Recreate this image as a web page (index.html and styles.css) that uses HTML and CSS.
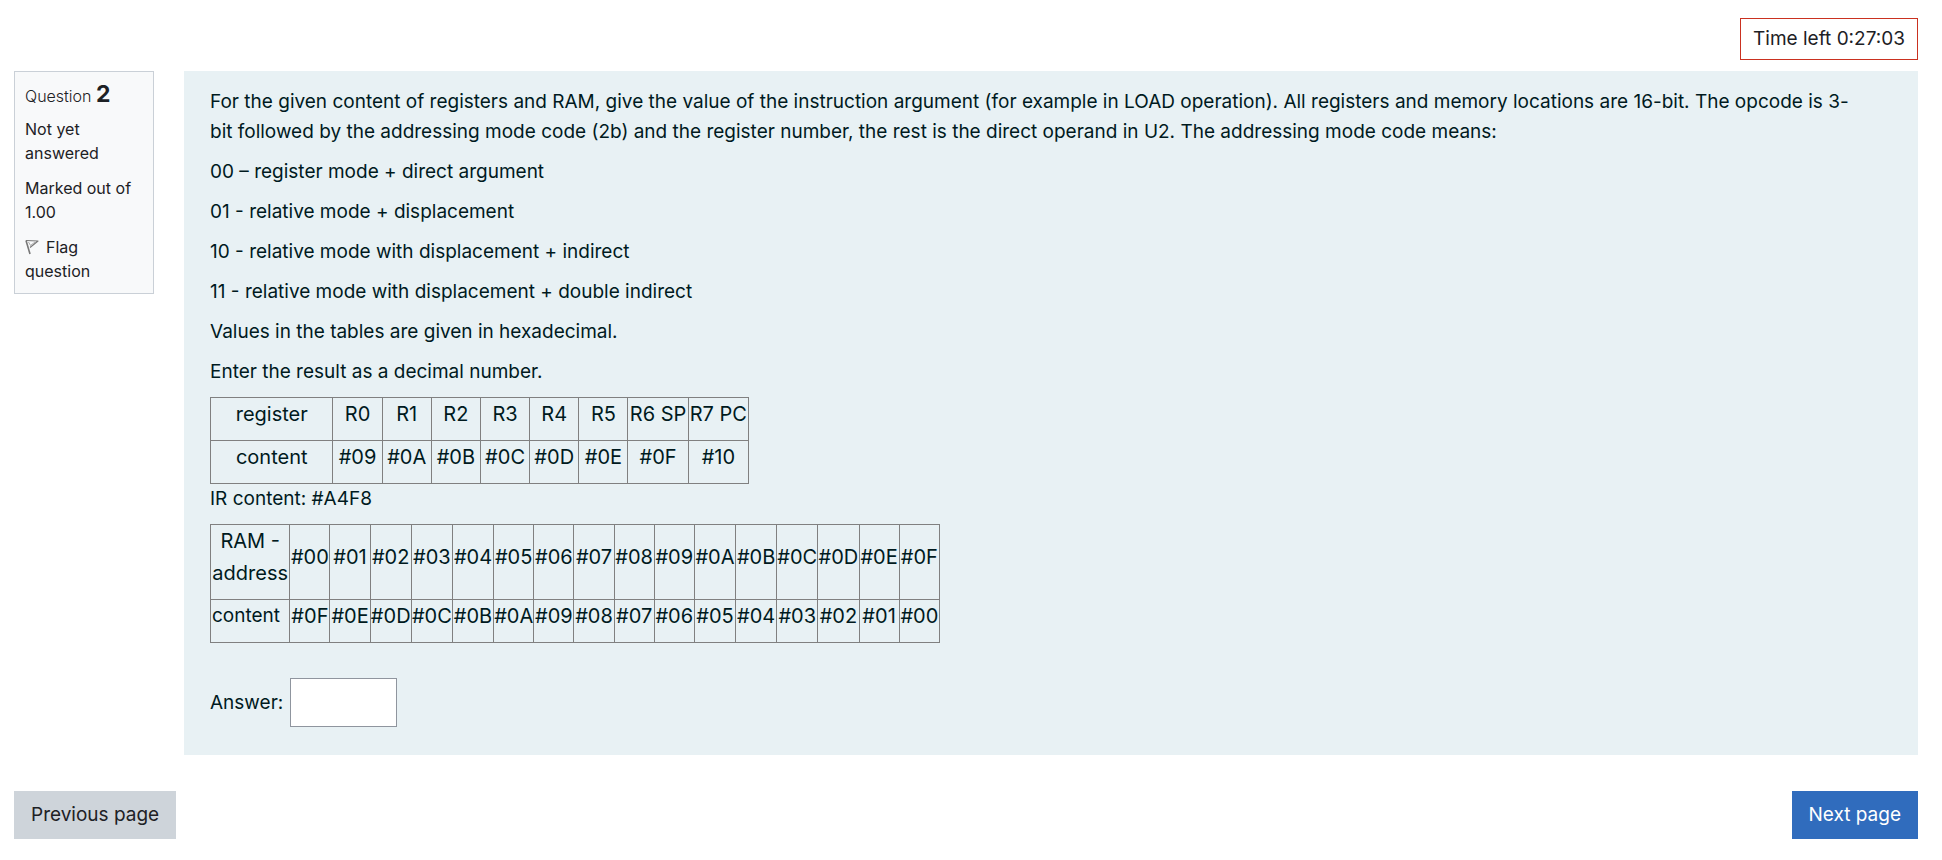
FILE: index.html
```html
<!DOCTYPE html>
<html lang="en">
<head>
    <meta charset="UTF-8">
    <meta name="viewport" content="width=device-width, initial-scale=1.0">
    <title>Quiz</title>
    <link rel="stylesheet" href="styles.css">
</head>
<body>
    <div class="timer-row">
        <div class="timer" role="timer">Time left 0:27:03</div>
    </div>

    <form class="quiz">
        <div class="question">
            <aside class="info">
                <h3>Question <span class="number">2</span></h3>
                <div class="state">Not yet answered</div>
                <div class="grade">Marked out of 1.00</div>
                <a class="flag" href="#"><svg class="flag-icon" width="15" height="16" viewBox="0 0 15 16" fill="none" stroke="#777" stroke-linejoin="round"><path d="M1 1.5L5 15" stroke-width="1.6"/><path d="M1 1.5L13 2L5 8.5" stroke-width="1.2"/><path d="M3.5 3L5.5 6.5L10 3" stroke="#aaa"/></svg>Flag question</a>
            </aside>

            <main class="formulation">
                <p>For the given content of registers and RAM, give the value of the instruction argument (for example in LOAD operation). All registers and memory locations are 16-bit. The opcode is 3-bit followed by the addressing mode code (2b) and the register number, the rest is the direct operand in U2. The addressing mode code means:</p>
                <p>00 – register mode + direct argument</p>
                <p>01 - relative mode + displacement</p>
                <p>10 - relative mode with displacement + indirect</p>
                <p>11 - relative mode with displacement + double indirect</p>
                <p>Values in the tables are given in hexadecimal.</p>
                <p>Enter the result as a decimal number.</p>

                <table class="registers">
                    <colgroup>
                        <col class="label-col">
                        <col class="reg-col" span="6">
                        <col class="special-col" span="2">
                    </colgroup>
                    <tr><td>register</td><td>R0</td><td>R1</td><td>R2</td><td>R3</td><td>R4</td><td>R5</td><td>R6 SP</td><td>R7 PC</td></tr>
                    <tr><td>content</td><td>#09</td><td>#0A</td><td>#0B</td><td>#0C</td><td>#0D</td><td>#0E</td><td>#0F</td><td>#10</td></tr>
                </table>

                <p>IR content: #A4F8</p>

                <table class="ram">
                    <colgroup>
                        <col class="label-col">
                        <col class="narrow-col" span="2">
                        <col class="wide-col" span="3">
                        <col class="narrow-col" span="5">
                        <col class="wide-col" span="4">
                        <col class="narrow-col" span="2">
                    </colgroup>
                    <tr><td>RAM - address</td><td>#00</td><td>#01</td><td>#02</td><td>#03</td><td>#04</td><td>#05</td><td>#06</td><td>#07</td><td>#08</td><td>#09</td><td>#0A</td><td>#0B</td><td>#0C</td><td>#0D</td><td>#0E</td><td>#0F</td></tr>
                    <tr><td class="left">content</td><td>#0F</td><td>#0E</td><td>#0D</td><td>#0C</td><td>#0B</td><td>#0A</td><td>#09</td><td>#08</td><td>#07</td><td>#06</td><td>#05</td><td>#04</td><td>#03</td><td>#02</td><td>#01</td><td>#00</td></tr>
                </table>

                <div class="answer">
                    <label for="answer">Answer:</label>
                    <input type="text" id="answer" name="answer">
                </div>
            </main>
        </div>

        <div class="buttons">
            <button type="submit" class="btn previous">Previous page</button>
            <button type="submit" class="btn next">Next page</button>
        </div>
    </form>
</body>
</html>
```

FILE: styles.css
```css
* {
    box-sizing: border-box;
}
body {
    margin: 0;
    padding: 18px 24px 20px 14px;
    background-color: #fff;
    color: #1d2125;
    font-family: Inter, "Liberation Sans", sans-serif;
    font-size: 19px;
    line-height: 30px;
}
.timer-row {
    display: flex;
    justify-content: flex-end;
    margin-bottom: 11px;
}
.timer {
    padding: 5px 12px;
    border: 1px solid #ca3120;
}
.question {
    display: flex;
    align-items: flex-start;
    gap: 30px;
}
.info {
    flex: 0 0 140px;
    padding: 14px 10px 10px;
    background-color: #f8f9fa;
    border: 1px solid #cad0d7;
    font-size: 16px;
    line-height: 24px;
}
.info h3 {
    margin: 0;
    font-size: 16px;
    font-weight: 300;
    line-height: 20px;
}
.number {
    font-size: 23px;
    font-weight: 700;
    line-height: 16px;
}
.state,
.grade,
.flag {
    display: block;
    margin-top: 11px;
}
.flag {
    color: #1d2125;
    text-decoration: none;
}
.flag-icon {
    margin-right: 6px;
    vertical-align: -2px;
}
.formulation {
    flex: 1;
    min-width: 0;
    padding: 16px 50px 28px 26px;
    background-color: #e8f1f4;
    color: #001a1e;
}
p {
    margin: 0 0 10px;
}
table {
    border-collapse: collapse;
    table-layout: fixed;
    font-size: 20px;
    line-height: 32px;
    text-align: center;
}
td {
    padding: 0 0 10px;
    border: 1px solid gray;
    white-space: nowrap;
}
td:first-child {
    white-space: normal;
}
.registers {
    width: 539px;
}
.registers .label-col {
    width: 122px;
}
.reg-col {
    width: 49px;
}
.special-col {
    width: 60px;
}
.ram {
    width: 730px;
}
.ram .label-col {
    width: 79px;
}
.narrow-col {
    width: 40px;
}
.wide-col {
    width: 41px;
}
.left {
    padding-left: 1px;
    font-size: 19px;
    text-align: left;
}
.answer {
    display: flex;
    align-items: center;
    gap: 7px;
    margin-top: 35px;
}
.answer input {
    width: 107px;
    height: 49px;
    padding: 7px 15px;
    border: 1px solid #8f959e;
    border-radius: 0;
    font: inherit;
}
.buttons {
    display: flex;
    justify-content: space-between;
    margin-top: 36px;
}
.btn {
    padding: 9px 17px;
    border: 0;
    font: inherit;
    cursor: pointer;
}
.previous {
    background-color: #ced4da;
    color: #1d2125;
}
.next {
    background-color: #306cbd;
    color: #fff;
}
```
